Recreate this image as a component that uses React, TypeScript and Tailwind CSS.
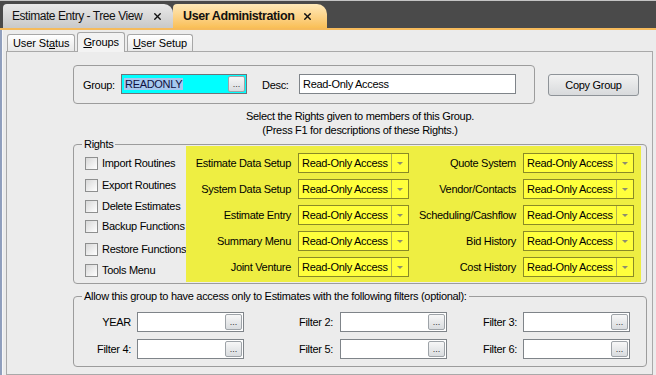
import { X } from 'lucide-react';

const leftRights = ['Estimate Data Setup', 'System Data Setup', 'Estimate Entry', 'Summary Menu', 'Joint Venture'];
const rightRights = ['Quote System', 'Vendor/Contacts', 'Scheduling/Cashflow', 'Bid History', 'Cost History'];

const checkRows = [
  { label: 'Import Routines', gap: 'mt-[12px]' },
  { label: 'Export Routines', gap: 'mt-[9px]' },
  { label: 'Delete Estimates', gap: 'mt-[8px]' },
  { label: 'Backup Functions', gap: 'mt-[7px]' },
  { label: 'Restore Functions', gap: 'mt-[10px]' },
  { label: 'Tools Menu', gap: 'mt-[8px]' },
];

function DotsButton() {
  return (
    <span className="flex h-[16px] w-[17px] shrink-0 items-end justify-center rounded-[2px] border border-[#9ea3a8] bg-gradient-to-b from-[#f7f7f7] to-[#d9dcdf] pb-[2px] text-[9px] leading-none tracking-normal text-[#333]">
      ...
    </span>
  );
}

function Dropdown() {
  return (
    <div className="flex h-[20px] w-[111px] shrink-0 border border-[#8a8a26] bg-[#ffff3c]">
      <span className="flex-1 overflow-hidden pl-[3px] leading-[18px]">Read-Only Access</span>
      <span className="flex w-[17px] shrink-0 items-center justify-center border-l border-[#b4b450]">
        <span className="h-0 w-0 border-x-[3px] border-t-[3px] border-x-transparent border-t-[#8e8e6e]" />
      </span>
    </div>
  );
}

function FilterInput() {
  return (
    <div className="flex h-[20px] w-[107px] shrink-0 items-center justify-end border border-[#7f8489] bg-white pr-[1px]">
      <DotsButton />
    </div>
  );
}

function Legend({ text }: { text: string }) {
  return (
    <span className="absolute -top-[8px] left-[8px] bg-[#ececec] px-[2px] leading-[14px]">{text}</span>
  );
}

export default function App() {
  return (
    <div className="flex h-[375px] w-[656px] flex-col overflow-hidden whitespace-nowrap bg-[#ececec] font-['Liberation_Sans',Arial,sans-serif] text-[11px] tracking-[-0.3px] text-black">
      {/* document tabs */}
      <div className="flex h-[28px] shrink-0 items-end border-t border-[#c4c4c4] bg-[#4a4a4a] pl-[3px]">
        <div className="flex h-[24px] w-[170px] items-center rounded-tl-[4px] rounded-tr-[9px] bg-gradient-to-b from-[#e9e9e9] to-[#c9c9c9] pl-[9px] pr-[5px] text-[12px] tracking-[-0.45px] text-[#111]">
          <span className="flex-1">Estimate Entry - Tree View</span>
          <X size={11} strokeWidth={3} className="mr-[5px] shrink-0" />
        </div>
        <div className="flex h-[24px] w-[154px] items-center rounded-tl-[4px] rounded-tr-[10px] bg-gradient-to-b from-[#ffe9b8] to-[#f9bf55] pl-[10px] pr-[5px] text-[12.5px] font-bold tracking-[-0.4px] text-[#111]">
          <span className="flex-1">User Administration</span>
          <X size={11} strokeWidth={3} className="mr-[9px] shrink-0" />
        </div>
      </div>
      <div className="h-[2px] shrink-0 bg-[#f6bb5c]" />

      <div className="flex flex-1">
        <div className="w-[2px] bg-[#909fbd]" />
        <div className="w-[1px] bg-[#f8f8f8]" />
        <div className="flex flex-1 flex-col pl-[3px] pr-[3px]">
          {/* sub tabs */}
          <div className="flex h-[21px] shrink-0 items-end gap-[2px] pl-[1px] tracking-[-0.1px]">
            <div className="h-[17px] rounded-t-[3px] border border-b-0 border-[#a7a7a7] bg-gradient-to-b from-white to-[#e8e8e8] px-[5px] leading-[16px]">
              User St<span className="underline">a</span>tus
            </div>
            <div className="relative z-10 -mb-px h-[20px] rounded-t-[3px] border border-b-0 border-[#a7a7a7] bg-[#f3f3f3] px-[5px] leading-[18px]">
              <span className="underline">G</span>roups
            </div>
            <div className="h-[17px] rounded-t-[3px] border border-b-0 border-[#a7a7a7] bg-gradient-to-b from-white to-[#e8e8e8] px-[5px] leading-[16px]">
              <span className="underline">U</span>ser Setup
            </div>
          </div>

          <div className="flex flex-1 flex-col border border-[#a9a9a9] pl-[66px]">
            <div className="flex w-[574px] flex-col">
              {/* group row */}
              <div className="mt-[13px] flex items-start">
                <div className="flex h-[39px] w-[462px] items-start rounded-[4px] border border-[#9c9c9c] pl-[9px] pt-[8px]">
                  <span className="mt-[3px] w-[38px]">Group:</span>
                  <div className="flex h-[20px] w-[126px] items-center border border-[#6f7479] bg-[#00ffff] pl-[2px] pr-[1px]">
                    <span className="flex-1">
                      <span className="bg-[#a6c8ef] px-[1px] text-[#101040]">READONLY</span>
                    </span>
                    <DotsButton />
                  </div>
                  <span className="ml-[15px] mt-[3px] w-[37px]">Desc:</span>
                  <div className="h-[20px] w-[217px] border border-[#7f8489] bg-white pl-[3px] leading-[18px]">
                    Read-Only Access
                  </div>
                </div>
                <button
                  type="button"
                  className="ml-[13px] mt-[9px] h-[22px] w-[91px] rounded-[3px] border border-[#8e9398] bg-gradient-to-b from-[#f2f2f2] to-[#d8dadc] text-[11px]"
                >
                  Copy Group
                </button>
              </div>

              {/* hint */}
              <div className="mt-[5px] text-center leading-[14px]">
                <p>Select the Rights given to members of this Group.</p>
                <p>(Press F1 for descriptions of these Rights.)</p>
              </div>

              {/* rights */}
              <div className="relative mt-[7px] flex h-[140px] rounded-[4px] border border-[#9c9c9c]">
                <Legend text="Rights" />
                <div className="flex w-[112px] flex-col overflow-hidden pl-[11px]">
                  {checkRows.map((row) => (
                    <div key={row.label} className={`flex h-[13px] items-center ${row.gap}`}>
                      <span className="h-[13px] w-[13px] shrink-0 border border-[#8e8f8f] bg-gradient-to-br from-[#d8d8d8] to-white" />
                      <span className="ml-[4px]">{row.label}</span>
                    </div>
                  ))}
                </div>
                <div className="mb-[1px] mt-[1px] flex w-[455px] flex-col gap-[6px] bg-[#eeee42] pb-[4px] pr-[7px] pt-[7px]">
                  {leftRights.map((label, i) => (
                    <div key={label} className="flex items-center">
                      <span className="w-[105px] text-right">{label}</span>
                      <span className="ml-[7px]">
                        <Dropdown />
                      </span>
                      <span className="w-[107px] text-right">{rightRights[i]}</span>
                      <span className="ml-[7px]">
                        <Dropdown />
                      </span>
                    </div>
                  ))}
                </div>
              </div>

              {/* filters */}
              <div className="relative mt-[12px] flex h-[71px] flex-col gap-[7px] rounded-[4px] border border-[#9c9c9c] pt-[15px]">
                <Legend text="Allow this group to have access only to Estimates with the following filters (optional):" />
                {[
                  ['YEAR', 'Filter 2:', 'Filter 3:'],
                  ['Filter 4:', 'Filter 5:', 'Filter 6:'],
                ].map((row) => (
                  <div key={row[0]} className="flex items-center">
                    <span className="w-[57px] text-right">{row[0]}</span>
                    <span className="ml-[6px]">
                      <FilterInput />
                    </span>
                    <span className="w-[89px] text-right">{row[1]}</span>
                    <span className="ml-[7px]">
                      <FilterInput />
                    </span>
                    <span className="w-[70px] text-right">{row[2]}</span>
                    <span className="ml-[6px]">
                      <FilterInput />
                    </span>
                  </div>
                ))}
              </div>
            </div>
          </div>
        </div>
      </div>
    </div>
  );
}
